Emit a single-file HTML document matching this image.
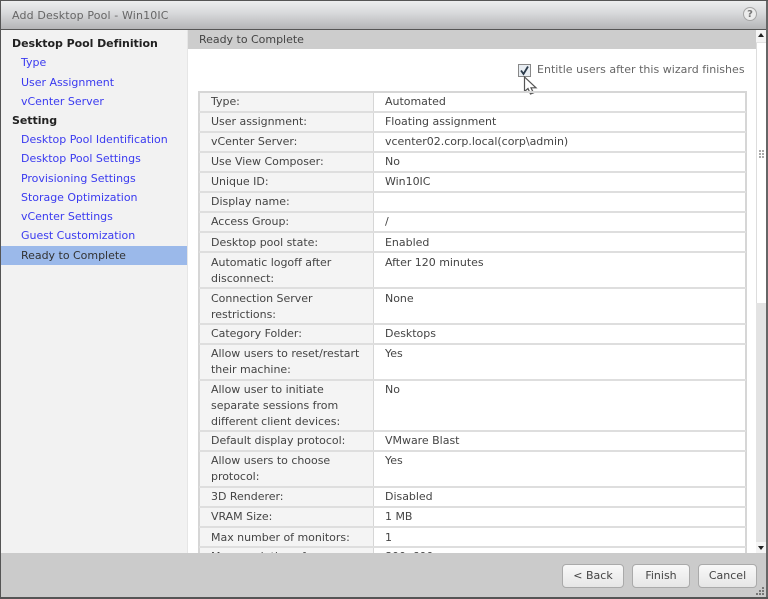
<!DOCTYPE html>
<html><head><meta charset="utf-8"><style>
html,body{margin:0;padding:0;background:#fff}
#w{position:relative;width:768px;height:599px;overflow:hidden;background:#cbcbcb;font-family:"DejaVu Sans",sans-serif;font-size:11px;color:#444;filter:blur(.3px)}
#w div{position:absolute;white-space:nowrap}
.t{letter-spacing:-.02px;line-height:14px;margin-top:1px}
.n{color:#3a3af0;left:21px}
.b{font-weight:bold;color:#222;left:12px;letter-spacing:-.05px}
.r{left:199px;width:547px;border-top:2px solid #dedede;box-sizing:border-box}
.btn{top:564px;height:22px;border:1px solid #aaa;border-radius:4px;background:linear-gradient(#f8f8f8,#e6e6e6);text-align:center;line-height:22px;color:#444;box-sizing:content-box}
</style></head><body><div id="w">
<div style="left:0;top:0;width:768px;height:30px;background:linear-gradient(#eeeff0,#d8d9db 45%,#b4b5b7);border-bottom:1px solid #555;box-sizing:border-box"></div>
<div class="t" style="left:12px;top:8px;color:#666;font-size:11px;letter-spacing:.14px">Add Desktop Pool - Win10IC</div>
<div style="left:743px;top:7px;width:12px;height:12px;border:1px solid #a5a5a5;border-radius:50%;background:#ececec;text-align:center;line-height:13px;font-size:10px;font-weight:bold;color:#777">?</div>

<div style="left:1px;top:30px;width:187px;height:523px;background:#f2f2f2"></div>
<div style="left:187px;top:30px;width:1px;height:523px;background:#e6e6e6"></div>
<div style="left:188px;top:30px;width:568px;height:523px;background:#fff"></div>
<div style="left:188px;top:30px;width:568px;height:19px;background:#cdcdcd"></div>
<div class="t" style="left:199px;top:32px;color:#444">Ready to Complete</div>

<div class="t b" style="top:36px">Desktop Pool Definition</div>
<div class="t n" style="top:55px">Type</div>
<div class="t n" style="top:75px">User Assignment</div>
<div class="t n" style="top:94px">vCenter Server</div>
<div class="t b" style="top:113px">Setting</div>
<div class="t n" style="top:132px">Desktop Pool Identification</div>
<div class="t n" style="top:151px">Desktop Pool Settings</div>
<div class="t n" style="top:171px">Provisioning Settings</div>
<div class="t n" style="top:190px">Storage Optimization</div>
<div class="t n" style="top:209px">vCenter Settings</div>
<div class="t n" style="top:228px">Guest Customization</div>
<div style="left:1px;top:246px;width:186px;height:19px;background:#9bb9ea"></div>
<div class="t" style="left:21px;top:248px;color:#333">Ready to Complete</div>

<div style="left:518px;top:64px;width:11px;height:11px;border:1px solid #888;background:#e8edf2"></div>
<svg style="position:absolute;left:518px;top:63px" width="13" height="14" viewBox="0 0 13 14"><path d="M3 7.5L5.5 11L10 3.5" fill="none" stroke="#2a3a4a" stroke-width="1.8"/></svg>
<div class="t" style="left:537px;top:62px;color:#666;letter-spacing:.02px">Entitle users after this wizard finishes</div>
<svg style="position:absolute;left:522px;top:76px" width="16" height="20" viewBox="0 0 16 20"><path d="M2.5 1V15.5L6 12.5L8.5 18L11.5 16.8L9 11.8H14Z" fill="#fff" stroke="#555" stroke-width="1.2"/></svg>

<div style="left:198px;top:91px;width:549px;height:462px;border:2px solid #d6d6d6;border-bottom:0;box-sizing:border-box"></div>
<div style="left:200px;top:93px;width:173px;height:460px;background:#f4f4f4;border-right:1px solid #d6d6d6"></div>
<div class="r" style="top:111px"></div><div class="r" style="top:131px"></div><div class="r" style="top:151px"></div><div class="r" style="top:171px"></div><div class="r" style="top:191px"></div><div class="r" style="top:211px"></div><div class="r" style="top:231px"></div><div class="r" style="top:251px"></div><div class="r" style="top:287px"></div><div class="r" style="top:323px"></div><div class="r" style="top:343px"></div><div class="r" style="top:379px"></div><div class="r" style="top:430px"></div><div class="r" style="top:450px"></div><div class="r" style="top:486px"></div><div class="r" style="top:506px"></div><div class="r" style="top:526px"></div><div class="r" style="top:546px"></div>

<div class="t" style="left:211px;top:94px">Type:</div><div class="t" style="left:385px;top:94px">Automated</div>
<div class="t" style="left:211px;top:114px">User assignment:</div><div class="t" style="left:385px;top:114px">Floating assignment</div>
<div class="t" style="left:211px;top:134px">vCenter Server:</div><div class="t" style="left:385px;top:134px">vcenter02.corp.local(corp\admin)</div>
<div class="t" style="left:211px;top:154px">Use View Composer:</div><div class="t" style="left:385px;top:154px">No</div>
<div class="t" style="left:211px;top:174px">Unique ID:</div><div class="t" style="left:385px;top:174px">Win10IC</div>
<div class="t" style="left:211px;top:194px">Display name:</div>
<div class="t" style="left:211px;top:214px">Access Group:</div><div class="t" style="left:385px;top:214px">/</div>
<div class="t" style="left:211px;top:235px">Desktop pool state:</div><div class="t" style="left:385px;top:235px">Enabled</div>
<div class="t" style="left:211px;top:255px">Automatic logoff after</div><div class="t" style="left:211px;top:271px">disconnect:</div><div class="t" style="left:385px;top:255px">After 120 minutes</div>
<div class="t" style="left:211px;top:291px">Connection Server</div><div class="t" style="left:211px;top:307px">restrictions:</div><div class="t" style="left:385px;top:291px">None</div>
<div class="t" style="left:211px;top:326px">Category Folder:</div><div class="t" style="left:385px;top:326px">Desktops</div>
<div class="t" style="left:211px;top:346px">Allow users to reset/restart</div><div class="t" style="left:211px;top:362px">their machine:</div><div class="t" style="left:385px;top:346px">Yes</div>
<div class="t" style="left:211px;top:382px">Allow user to initiate</div><div class="t" style="left:211px;top:398px">separate sessions from</div><div class="t" style="left:211px;top:414px">different client devices:</div><div class="t" style="left:385px;top:382px">No</div>
<div class="t" style="left:211px;top:433px">Default display protocol:</div><div class="t" style="left:385px;top:433px">VMware Blast</div>
<div class="t" style="left:211px;top:453px">Allow users to choose</div><div class="t" style="left:211px;top:469px">protocol:</div><div class="t" style="left:385px;top:453px">Yes</div>
<div class="t" style="left:211px;top:489px">3D Renderer:</div><div class="t" style="left:385px;top:489px">Disabled</div>
<div class="t" style="left:211px;top:509px">VRAM Size:</div><div class="t" style="left:385px;top:509px">1 MB</div>
<div class="t" style="left:211px;top:530px">Max number of monitors:</div><div class="t" style="left:385px;top:530px">1</div>
<div class="t" style="left:211px;top:549px">Max resolution of</div><div class="t" style="left:385px;top:549px">800x600</div>

<div style="left:756px;top:30px;width:10px;height:523px;background:#e3e3e3"></div>
<div style="left:756px;top:43px;width:10px;height:260px;background:#fff;border-left:1px solid #ddd;box-sizing:border-box"></div>
<div style="left:756px;top:30px;width:10px;height:12px;background:#f4f4f4"></div>
<div style="left:758px;top:33px;width:0;height:0;border-left:3px solid transparent;border-right:3px solid transparent;border-bottom:4px solid #222"></div>
<div style="left:756px;top:542px;width:10px;height:11px;background:#f4f4f4"></div>
<div style="left:758px;top:546px;width:0;height:0;border-left:3px solid transparent;border-right:3px solid transparent;border-top:4px solid #222"></div>
<svg style="position:absolute;left:759px;top:150px" width="6" height="9"><g fill="#aaa"><rect x="0" y="0" width="2" height="2"/><rect x="3" y="0" width="2" height="2"/><rect x="0" y="3" width="2" height="2"/><rect x="3" y="3" width="2" height="2"/><rect x="0" y="6" width="2" height="2"/><rect x="3" y="6" width="2" height="2"/></g></svg>

<div style="left:0;top:553px;width:768px;height:44px;background:#cbcbcb"></div>
<div class="btn" style="left:562px;width:60px">&lt; Back</div>
<div class="btn" style="left:632px;width:56px">Finish</div>
<div class="btn" style="left:698px;width:57px">Cancel</div>
<svg style="position:absolute;left:755px;top:586px" width="10" height="10"><g fill="#777"><rect x="7" y="1" width="2" height="2"/><rect x="4" y="4" width="2" height="2"/><rect x="7" y="4" width="2" height="2"/><rect x="1" y="7" width="2" height="2"/><rect x="4" y="7" width="2" height="2"/><rect x="7" y="7" width="2" height="2"/></g></svg>

<div style="left:0;top:0;width:1px;height:599px;background:#555"></div>
<div style="left:766px;top:0;width:2px;height:599px;background:#666"></div>
<div style="left:0;top:0;width:768px;height:1px;background:#555"></div>
<div style="left:0;top:597px;width:768px;height:2px;background:#555"></div>
</div></body></html>
